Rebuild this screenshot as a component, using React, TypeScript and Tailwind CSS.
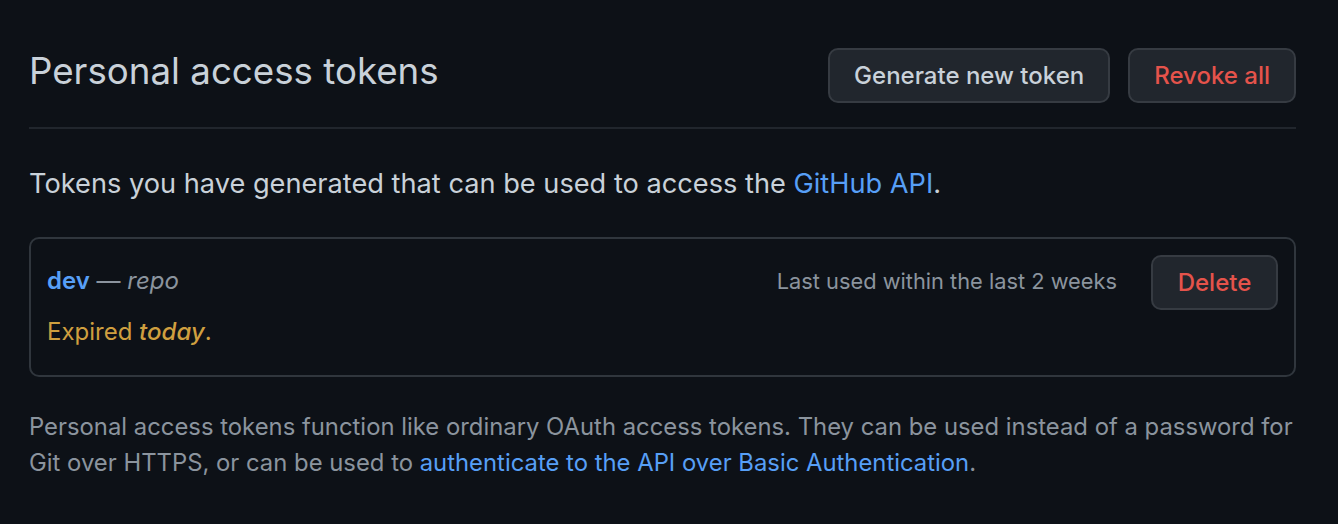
export default function App() {
  return (
    <div
      className="min-h-screen bg-[#0d1117] pl-[29px] pr-[42px] pt-[48px] text-[#c9d1d9]"
      style={{ fontFamily: 'Inter, "Noto Sans", sans-serif' }}
    >
      {/* Header */}
      <div className="flex items-center justify-between pb-[24px] border-b-2 border-[#21262d]">
        <h1 className="text-[36.7px] leading-[44px] font-normal text-[#c9d1d9] -mt-[10px]">
          Personal access tokens
        </h1>
        <div className="flex items-center gap-[18px]">
          <button className="h-[55px] px-[24px] rounded-[10px] border-2 border-[#363b42] bg-[#21262d] text-[24px] font-medium text-[#c9d1d9]">
            Generate new token
          </button>
          <button className="h-[55px] px-[24px] rounded-[10px] border-2 border-[#363b42] bg-[#21262d] text-[24px] font-medium text-[#e5534b]">
            Revoke all
          </button>
        </div>
      </div>

      <p className="mt-[37px] text-[27.2px] leading-[36px]">
        Tokens you have generated that can be used to access the{' '}
        <a className="text-[#579ff6]">GitHub API</a>.
      </p>

      {/* Token box */}
      <div className="mt-[35px] rounded-[10px] border-2 border-[#30363d] pl-[16px] pr-[16px] pt-[16px] pb-[25px]">
        <div className="flex items-center justify-between">
          <div className="text-[24px] leading-[36px] -mt-[4px]">
            <span className="font-semibold text-[#579ff6]">dev</span>
            <span className="text-[#8b949e]"> — <em>repo</em></span>
          </div>
          <div className="flex items-center gap-[34px]">
            <span className="text-[21.8px] text-[#8b949e] -mt-[2px]">Last used within the last 2 weeks</span>
            <button className="h-[55px] w-[127px] rounded-[10px] border-2 border-[#363b42] bg-[#21262d] text-[24px] font-medium text-[#e5534b]">
              Delete
            </button>
          </div>
        </div>
        <p className="mt-[4px] text-[24px] leading-[36px] text-[#cf9f3f]">
          Expired <em className="font-medium">today</em>.
        </p>
      </div>

      <p className="mt-[32px] text-[23.85px] leading-[36px] text-[#8b949e]">
        Personal access tokens function like ordinary OAuth access tokens. They can be used instead of a password for
        <br />
        Git over HTTPS, or can be used to{' '}
        <a className="text-[#579ff6]">authenticate to the API over Basic Authentication</a>.
      </p>
    </div>
  );
}
